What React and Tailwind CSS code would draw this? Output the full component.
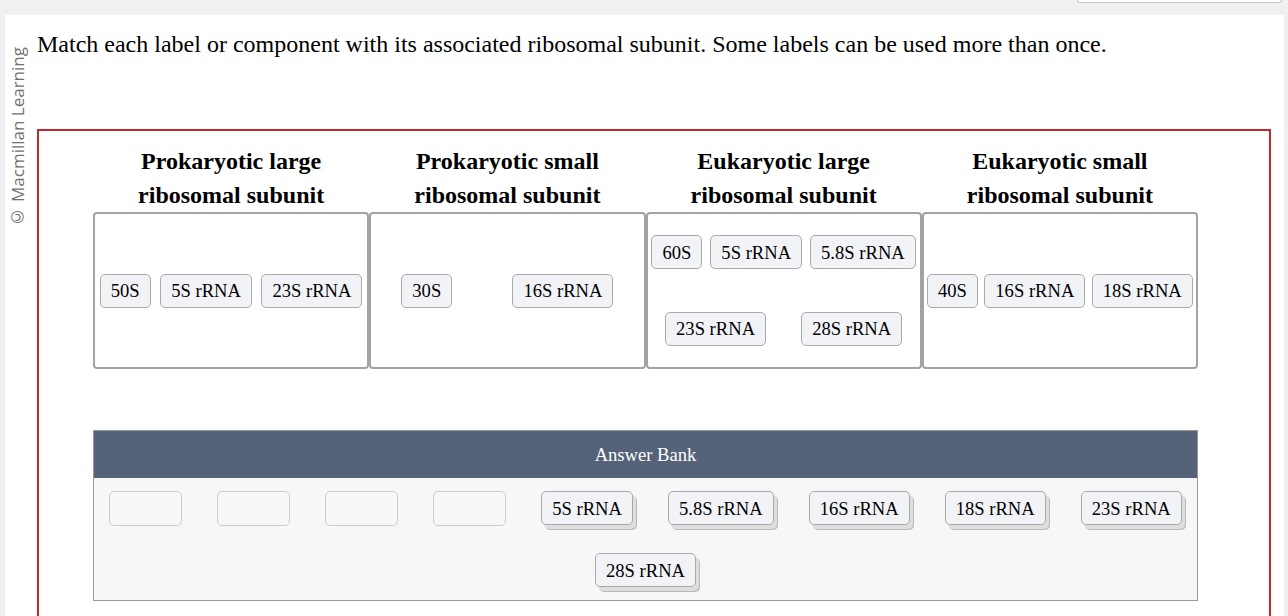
import React from 'react';

const serif = { fontFamily: '"Liberation Serif", "Times New Roman", serif' };

const zones = [
  { title: ['Prokaryotic large', 'ribosomal subunit'], chips: ['50S', '5S rRNA', '23S rRNA'] },
  { title: ['Prokaryotic small', 'ribosomal subunit'], chips: ['30S', '16S rRNA'] },
  { title: ['Eukaryotic large', 'ribosomal subunit'], chips: ['60S', '5S rRNA', '5.8S rRNA', '23S rRNA', '28S rRNA'] },
  { title: ['Eukaryotic small', 'ribosomal subunit'], chips: ['40S', '16S rRNA', '18S rRNA'] },
];

const bankChips = ['5S rRNA', '5.8S rRNA', '16S rRNA', '18S rRNA', '23S rRNA', '28S rRNA'];

const Chip = ({ label, stacked }) => (
  <div
    className={
      'h-[34px] px-[10px] flex items-center bg-[#f2f3f7] border border-[#a9a9a9] rounded-[5px] text-[18.6px] leading-[21px] text-black whitespace-nowrap ' +
      (stacked ? 'shadow-[3px_4px_0_0_#dedede,4px_5px_0_0_#b9b9b9]' : '')
    }
  >
    {label}
  </div>
);

const App = () => {
  return (
    <div className="w-[1288px] h-[616px] overflow-hidden bg-[#f0f0f0]" style={serif}>
      {/* top strip */}
      <div className="h-[15px] flex justify-end pr-[6px]">
        <div className="w-[205px] h-[3px] bg-white border border-t-0 border-[#c6c6c6] rounded-b-[4px]" />
      </div>

      {/* card */}
      <div className="ml-[5px] w-[1279px] h-[601px] bg-white flex">
        {/* copyright side label */}
        <div className="w-[32px] shrink-0 pl-[1px] pt-[32px]">
          <div
            className="[writing-mode:vertical-rl] rotate-180 text-[17px] leading-[24px] text-[#707070] whitespace-nowrap"
            style={{ fontFamily: '"Open Sans", "Noto Sans", sans-serif' }}
          >
            © Macmillan Learning
          </div>
        </div>

        <div className="flex-1 pt-[15px]">
          <p className="text-[24px] leading-[28px] text-black">
            Match each label or component with its associated ribosomal subunit. Some labels can be used more than once.
          </p>

          {/* question area */}
          <div className="mt-[71px] w-[1234px] h-[600px] border-2 border-[#c0282e] pl-[54px] pt-[13px]">
            <div className="w-[1105px] grid grid-cols-4">
              {zones.map((z, i) => (
                <div key={i} className="flex flex-col">
                  <div className="text-center font-bold text-[24px] leading-[34px] text-black">
                    {z.title[0]}
                    <br />
                    {z.title[1]}
                  </div>
                  <div className="h-[157px] border-2 border-[#a3a3a3] rounded-[4px] flex flex-wrap justify-around items-center content-around">
                    {z.chips.map((c, j) => (
                      <Chip key={j} label={c} />
                    ))}
                  </div>
                </div>
              ))}
            </div>

            {/* answer bank */}
            <div className="mt-[61px] w-[1105px] border border-[#999999]">
              <div className="h-[47px] bg-[#556278] flex items-center justify-center text-white text-[18.6px]">
                Answer Bank
              </div>
              <div className="bg-[#f7f7f7] pt-[13px] pb-[13px] flex flex-wrap justify-center gap-x-[35px] gap-y-[27px]">
                {[0, 1, 2, 3].map((k) => (
                  <div key={k} className="w-[73px] h-[35px] border border-[#cccccc] rounded-[5px]" />
                ))}
                {bankChips.map((c, j) => (
                  <Chip key={j} label={c} stacked />
                ))}
              </div>
            </div>
          </div>
        </div>
      </div>
    </div>
  );
};

export default App;
